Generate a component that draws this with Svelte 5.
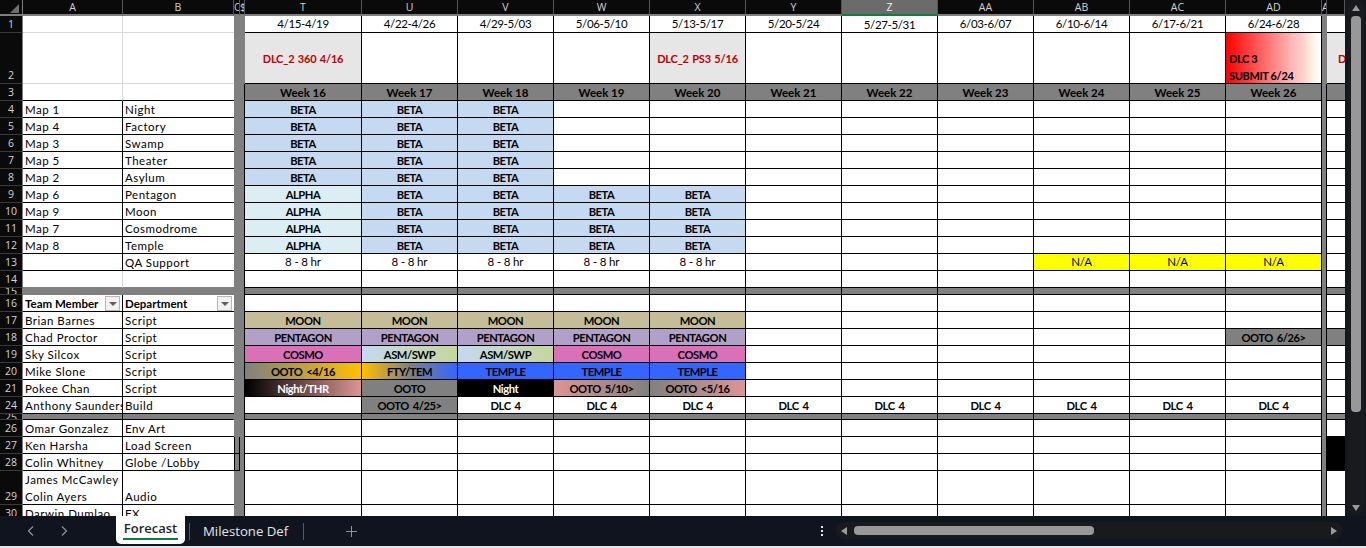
<script>
  const heads = ['A','B','C','$','T','U','V','W','X','Y','Z','AA','AB','AC','AD','AE',''];
  const weeks = ['T','U','V','W','X','Y','Z','AA','AB','AC','AD'];

  const fills = {
    'BETA':'beta','ALPHA':'alpha','MOON':'moon','PENTAGON':'pent','COSMO':'cosmo','TEMPLE':'temple',
    'ASM/SWP':'asm','OOTO <4/16':'g-ooto','FTY/TEM':'g-fty','Night/THR':'g-night','OOTO':'gray',
    'Night':'black','OOTO 5/10>':'g-o510','OOTO <5/16':'g-o516','OOTO 4/25>':'gray','OOTO 6/26>':'gray','N/A':'yellow'
  };
  const pad = (list) => [...list, ...Array(11 - list.length).fill('')];
  const dlc = Array(9).fill('DLC 4');
  const dates = ['4/15-4/19','4/22-4/26','4/29-5/03','5/06-5/10','5/13-5/17','5/20-5/24','5/27-5/31','6/03-6/07','6/10-6/14','6/17-6/21','6/24-6/28'];
  const weekLabels = weeks.map((_, i) => `Week ${16 + i}`);
  const b3 = ['BETA','BETA','BETA'];
  const ab = ['ALPHA','BETA','BETA','BETA','BETA'];

  const rows = [
    { n:'1', h:17, mode:'top', cells:dates, plain:true },
    { n:'2', h:51, mode:'top', special:true, cells:pad([]) },
    { n:'3', h:17, mode:'head', cells:weekLabels, allGray:true, last:'gray' },
    { n:'4', h:17, a:'Map 1', b:'Night', cells:pad(b3) },
    { n:'5', h:17, a:'Map 4', b:'Factory', cells:pad(b3) },
    { n:'6', h:17, a:'Map 3', b:'Swamp', cells:pad(b3) },
    { n:'7', h:17, a:'Map 5', b:'Theater', cells:pad(b3) },
    { n:'8', h:17, a:'Map 2', b:'Asylum', cells:pad(b3) },
    { n:'9', h:17, a:'Map 6', b:'Pentagon', cells:pad(ab) },
    { n:'10', h:17, a:'Map 9', b:'Moon', cells:pad(ab) },
    { n:'11', h:17, a:'Map 7', b:'Cosmodrome', cells:pad(ab) },
    { n:'12', h:17, a:'Map 8', b:'Temple', cells:pad(ab) },
    { n:'13', h:17, a:'', b:'QA Support', plain:true, cells:['8 - 8 hr','8 - 8 hr','8 - 8 hr','8 - 8 hr','8 - 8 hr','','','','N/A','N/A','N/A'] },
    { n:'14', h:17, mode:'before-thin', cells:pad([]) },
    { n:'15', h:7, mode:'thin', cells:pad([]) },
    { n:'16', h:17, mode:'filter', a:'Team Member', b:'Department', cells:pad([]) },
    { n:'17', h:17, a:'Brian Barnes', b:'Script', cells:pad(Array(5).fill('MOON')) },
    { n:'18', h:17, a:'Chad Proctor', b:'Script', last:'gray', cells:[...Array(5).fill('PENTAGON'),'','','','','','OOTO 6/26>'] },
    { n:'19', h:17, a:'Sky Silcox', b:'Script', cells:pad(['COSMO','ASM/SWP','ASM/SWP','COSMO','COSMO']) },
    { n:'20', h:17, a:'Mike Slone', b:'Script', cells:pad(['OOTO <4/16','FTY/TEM','TEMPLE','TEMPLE','TEMPLE']) },
    { n:'21', h:17, a:'Pokee Chan', b:'Script', cells:pad(['Night/THR','OOTO','Night','OOTO 5/10>','OOTO <5/16']) },
    { n:'24', h:17, a:'Anthony Saunders', b:'Build', cells:['', 'OOTO 4/25>', ...dlc] },
    { n:'25', h:6, mode:'thin', keepA:true, cells:pad([]) },
    { n:'26', h:17, a:'Omar Gonzalez', b:'Env Art', cells:pad([]) },
    { n:'27', h:17, a:'Ken Harsha', b:'Load Screen', mark:true, last:'black', cells:pad([]) },
    { n:'28', h:17, a:'Colin Whitney', b:'Globe /Lobby', mark:true, last:'black', cells:pad([]) },
    { n:'29', h:34, a:'James McCawley\nColin Ayers', b:'Audio', cells:pad([]) },
    { n:'30', h:17, a:'Darwin Dumlao', b:'FX', cells:pad([]) }
  ];

  const gridRows = '16px ' + rows.map((r) => r.h + 'px').join(' ');
</script>

<div class="window">
  <div class="sheet-area">
    <div class="sheet" style:grid-template-rows={gridRows}>
      <div class="corner"><span class="tri"></span></div>
      {#each heads as h}
        <div class="col-head" class:sel={h === 'Z'} class:clip={h === 'C' || h === '$' || h === 'AE'}>{h}</div>
      {/each}

      {#each rows as r}
        <div class="row-head" class:thin-head={r.mode === 'thin'}>{r.n}</div>

        {#if r.mode === 'thin'}
          <div class="c a-cell thinfill" class:vline={r.keepA} class:lined={r.keepA}></div>
          <div class="c thinfill" class:lined={r.keepA}></div>
        {:else}
          <div class="c a-cell txt"
            class:light={r.mode === 'top' || r.mode === 'before-thin'}
            class:light-right={r.mode === 'head'}
            class:no-bottom-line={r.mode === 'before-thin'}
            class:tb={r.mode === 'filter'}>
            <span class="label">{r.a ?? ''}</span>
            {#if r.mode === 'filter'}<span class="filter"><i></i></span>{/if}
          </div>
          <div class="c b-cell txt"
            class:light={r.mode === 'top' || r.mode === 'before-thin'}
            class:no-bottom-line={r.mode === 'before-thin'}
            class:tb={r.mode === 'filter'}>
            <span class="label">{r.b ?? ''}</span>
            {#if r.mode === 'filter'}<span class="filter"><i></i></span>{/if}
          </div>
        {/if}

        <div class="gutter-l" class:mark={r.mark}></div>
        <div class="gutter-r" class:ruled={r.mode !== 'top'}></div>

        {#each r.cells as v, i}
          {#if r.special && i === 0}
            <div class="c mile shade"><span class="red">DLC_2 360 4/16</span></div>
          {:else if r.special && i === 4}
            <div class="c mile shade"><span class="red">DLC_2 PS3 5/16</span></div>
          {:else if r.special && i === 10}
            <div class="c submit">DLC 3<br />SUBMIT 6/24</div>
          {:else}
            <div class="c val {fills[v] ?? ''}"
              class:head={r.allGray}
              class:strong={!r.plain && !r.allGray}
              class:week={r.allGray}
              class:date={r.n === '1'}
              class:thinrow={r.mode === 'thin'}
              class:nudge={r.n === '1' && i === 6}>{v}</div>
          {/if}
        {/each}

        <div class="edge" class:ruled={r.mode !== 'top'}></div>
        {#if r.special}
          <div class="tail shade tail-text"><span class="red">DLC_2</span></div>
        {:else}
          <div class="tail {r.last ?? ''}" class:thinfill={r.mode === 'thin'} class:closed={r.mode !== 'top' || r.n === '1'}></div>
        {/if}
      {/each}
    </div>

    <div class="vbar">
      <div class="vtrack">
        <span class="arrow up"></span>
        <div class="vthumb"></div>
        <span class="arrow down"></span>
      </div>
    </div>
  </div>

  <div class="tabbar">
    <div class="nav">
      <svg width="10" height="12" viewBox="0 0 10 12"><path d="M7 1.5 2.5 6 7 10.5" fill="none" stroke="#8f959d" stroke-width="1.2"/></svg>
      <svg width="10" height="12" viewBox="0 0 10 12"><path d="M3 1.5 7.5 6 3 10.5" fill="none" stroke="#8f959d" stroke-width="1.2"/></svg>
    </div>
    <div class="tab active"><span>Forecast</span></div>
    <span class="sep first"></span>
    <div class="tab">Milestone Def</div>
    <span class="sep"></span>
    <svg class="plus" width="13" height="13" viewBox="0 0 13 13"><path d="M6.5 1v11M1 6.5h11" stroke="#8f959d" stroke-width="1"/></svg>
    <div class="dots"><i></i><i></i><i></i></div>
    <div class="htrack">
      <span class="arrow left"></span>
      <div class="hthumb"></div>
      <span class="arrow right"></span>
    </div>
  </div>
</div>

<style>
  :global(body) { margin: 0; background: #0f141f; }
  .window {
    width: 1366px;
    height: 548px;
    overflow: hidden;
    display: flex;
    flex-direction: column;
    background: #e8e8e8;
    font-family: Lato, "Liberation Sans", sans-serif;
  }
  .sheet-area { display: flex; height: 516px; background: #fff; flex: none; }
  .sheet {
    width: 1345px;
    height: 516px;
    overflow: hidden;
    display: grid;
    grid-template-columns: 23px 100px 111px 6px 5px 117px repeat(10, 96px) 5px 18px;
    font-size: 11.5px;
    color: #000;
    background: #fff;
  }
  .corner, .col-head, .row-head {
    box-sizing: border-box;
    background: #0a0a0a;
    color: #d4d4d4;
    font-family: "Open Sans", "Noto Sans", sans-serif;
    font-size: 10.5px;
  }
  .corner { border-right: 1px solid #7f7f7f; border-bottom: 2px solid #7f7f7f; position: relative; }
  .tri {
    position: absolute; right: 3px; bottom: 1px; width: 0; height: 0;
    border-left: 9px solid transparent; border-bottom: 9px solid #6e6e6e;
  }
  .col-head {
    border-right: 1px solid #555;
    border-bottom: 2px solid #7f7f7f;
    display: flex; align-items: center; justify-content: center;
    overflow: hidden;
    line-height: 14px;
  }
  .col-head.clip { justify-content: flex-start; }
  .col-head.sel { background: #6b6b6b; color: #f0f0f0; border-bottom-color: #107c41; }
  .row-head {
    border-right: 1px solid #7f7f7f;
    border-bottom: 1px solid #3a3a3a;
    display: flex; align-items: flex-end; justify-content: center;
    overflow: hidden;
    line-height: 16px;
  }
  .thin-head { align-items: center; }

  .c {
    box-sizing: border-box;
    border-right: 1px solid #000;
    border-bottom: 1px solid #000;
    overflow: hidden;
    white-space: nowrap;
    min-width: 0;
  }
  .txt {
    display: flex; align-items: flex-end; padding-left: 2px; line-height: 17px;
    letter-spacing: 0.5px;
  }
  .txt .label { white-space: pre; flex: 1; min-width: 0; overflow: hidden; margin-bottom: -1px; }
  .b-cell { border-right: none; }
  .light { border-right-color: #d9d9d9; border-bottom-color: #d9d9d9; }
  .light-right { border-right-color: #d9d9d9; }
  .no-bottom-line { border-bottom-color: #808080; }
  .tb { font-weight: 700; letter-spacing: 0; padding-right: 1px; }
  .filter {
    flex: none; box-sizing: border-box; width: 15px; height: 15px;
    background: #f2f2f2; border: 1px solid #b8b8b8;
    display: flex; align-items: center; justify-content: center;
    margin-right: 1px;
  }
  .filter i {
    width: 0; height: 0;
    border-left: 4px solid transparent; border-right: 4px solid transparent;
    border-top: 4px solid #5f5f5f;
  }
  .thinfill { background: #808080; border-right-color: #808080; border-bottom-color: #808080; }
  .a-cell.vline { border-right-color: #000; }
  .thinfill.lined { border-bottom-color: #000; }
  .thinrow { background: #808080; }

  .gutter-l { background: #808080; }
  .gutter-r { background: #808080; box-sizing: border-box; }
  .gutter-r.ruled { border-right: 1px solid #000; }
  .gutter-l.mark { border-left: 1px solid #000; border-right: 1px solid #000; border-bottom: 1px solid #000; box-sizing: border-box; }
  .edge { background: #808080; box-sizing: border-box; }
  .edge.ruled { border-right: 1px solid #000; }
  .tail { box-sizing: border-box; }
  .tail.closed { border-bottom: 1px solid #000; }

  .val {
    text-align: center;
    line-height: 16px;
    letter-spacing: -0.15px;
  }
  .date { letter-spacing: -0.35px; }
  .nudge { line-height: 18px; }
  .strong { font-weight: 700; font-size: 11.2px; letter-spacing: -0.45px; word-spacing: 1.5px; padding-top: 1px; }
  .week { font-weight: 700; letter-spacing: 0; padding-top: 1px; }
  .beta { background: #c5d9f1; }
  .alpha { background: #daeef3; }
  .gray, .head { background: #808080; }
  .moon { background: #c4bd97; }
  .pent { background: #b1a0c7; }
  .cosmo { background: #da70b8; }
  .temple { background: #3366ff; }
  .yellow { background: #ffff00; }
  .black { background: #000; color: #fff; }
  .tail.black { border-bottom-color: #000; }
  .asm { background: linear-gradient(90deg, #c5d9f1, #c4d79b); }
  .g-ooto { background: linear-gradient(90deg, #808080, #ffc000); }
  .g-fty { background: linear-gradient(90deg, #ffc000, #808080 50%, #3366ff); }
  .g-night { background: linear-gradient(90deg, #000, #da9694); color: #fff; }
  .g-o510 { background: linear-gradient(90deg, #da9694, #808080); }
  .g-o516 { background: linear-gradient(90deg, #808080, #da9694); }

  .mile { display: flex; align-items: center; justify-content: center; }
  .shade { background: #e6e6e6; }
  .red { color: #c00000; font-weight: 700; font-size: 11px; letter-spacing: -0.2px; word-spacing: 1px; }
  .tail-text { display: flex; align-items: center; padding-left: 11px; overflow: hidden; box-sizing: border-box; border-bottom: 1px solid #000; white-space: nowrap; }
  .submit {
    background: linear-gradient(90deg, #ff0000, #ffb9b9 70%, #ffcccc 80%, #fff5e5 92%, #fff);
    font-weight: 700;
    font-size: 11px;
    letter-spacing: -0.35px;
    line-height: 17px;
    padding-left: 3px;
    padding-top: 17px;
  }

  .vbar { width: 21px; background: #14181e; flex: none; display: flex; justify-content: center; }
  .vtrack {
    width: 16px; height: 514px; background: #181a1d; border-radius: 8px;
    display: flex; flex-direction: column; align-items: center;
  }
  .vthumb { width: 10px; height: 396px; margin-top: 5px; background: #989898; border-radius: 4px; }
  .arrow { width: 0; height: 0; display: block; flex: none; }
  .up {
    margin-top: 5px;
    border-left: 4px solid transparent; border-right: 4px solid transparent; border-bottom: 6px solid #9a9a9a;
  }
  .down {
    margin-top: auto; margin-bottom: 3px;
    border-left: 4px solid transparent; border-right: 4px solid transparent; border-top: 6px solid #9a9a9a;
  }

  .tabbar {
    height: 30px;
    flex: none;
    background: #0f141f;
    display: flex;
    align-items: flex-start;
    font-family: "Open Sans", "Noto Sans", sans-serif;
    font-size: 13.2px;
    color: #e4e6e8;
    border-bottom: 2px solid #e8e8e8;
  }
  .nav { width: 116px; flex: none; display: flex; gap: 23px; padding: 9px 0 0 26px; box-sizing: border-box; }
  .tab { height: 30px; line-height: 30px; box-sizing: border-box; }
  .tab.active {
    width: 69px;
    height: 28px;
    background: #fff;
    color: #1f1f1f;
    border-radius: 0 0 5px 5px;
    text-align: center;
    font-weight: 600;
    font-size: 13px;
    line-height: 25px;
    flex: none;
  }
  .tab.active span { display: inline-block; border-bottom: 2px solid #107c41; line-height: 19px; padding: 0 1px; margin-top: 3px; }
  .sep { width: 1px; height: 17px; background: #545a63; margin: 7px 0 0 0; flex: none; }
  .sep.first { margin: 7px 13px 0 4px; }
  .tab:not(.active) { width: 100px; flex: none; white-space: nowrap; }
  .plus { margin: 9px 0 0 41px; flex: none; }
  .dots { margin: 10px 0 0 463px; width: 3px; display: flex; flex-direction: column; gap: 2px; flex: none; }
  .dots i { width: 2px; height: 2px; background: #e4e6e8; display: block; }
  .htrack {
    margin: 6px 0 0 12px;
    width: 506px; height: 17px;
    background: #181a1d; border-radius: 8px;
    display: flex; align-items: center; flex: none;
  }
  .hthumb { width: 240px; height: 9px; background: #989898; border-radius: 4px; margin-left: 7px; }
  .left {
    margin-left: 5px;
    border-top: 4px solid transparent; border-bottom: 4px solid transparent; border-right: 6px solid #9a9a9a;
  }
  .right {
    margin-left: auto; margin-right: 5px;
    border-top: 4px solid transparent; border-bottom: 4px solid transparent; border-left: 6px solid #9a9a9a;
  }
</style>
